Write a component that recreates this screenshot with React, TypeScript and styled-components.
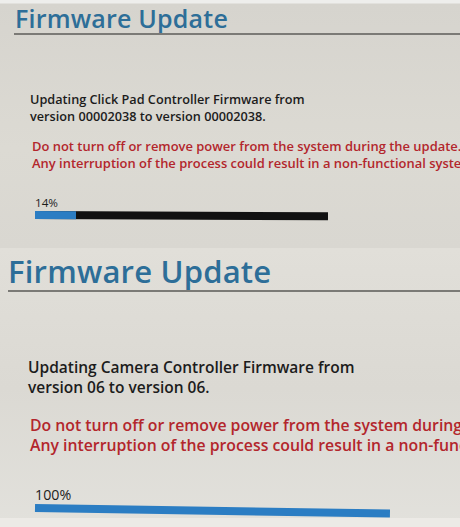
import React from "react";
import styled, { createGlobalStyle } from "styled-components";

interface UpdateInfo {
  device: string;
  from: string;
  to: string;
  percent: number;
}

const GlobalStyle = createGlobalStyle`
  html, body {
    margin: 0;
    padding: 0;
    background: #dcdad4;
  }
  body {
    font-family: "Open Sans", "Noto Sans", sans-serif;
    width: 460px;
    height: 527px;
    overflow: hidden;
  }
`;

const screens: UpdateInfo[] = [
  { device: "Click Pad", from: "00002038", to: "00002038", percent: 14 },
  { device: "Camera", from: "06", to: "06", percent: 100 },
];

const App: React.FC = () => {
  return (
    <Page>
      <GlobalStyle />
      <Screen $top>
        <Title $size={25} $left={15}>Firmware Update</Title>
        <Rule $left={14} />
        <Content $left={30} $size={12.7} $gap={56}>
          <Body>
            Updating {screens[0].device} Controller Firmware from
            <br />
            version {screens[0].from} to version {screens[0].to}.
          </Body>
          <Warning>
            Do not turn off or remove power from the system during the update.
            <br />
            Any interruption of the process could result in a non-functional system.
          </Warning>
          <Progress $left={5}>
            <Label>{screens[0].percent}%</Label>
            <Track $width={293} $height={8} $empty="#111">
              <Fill style={{ width: `${screens[0].percent}%` }} />
            </Track>
          </Progress>
        </Content>
      </Screen>
      <Screen>
        <Title $size={31} $left={8}>Firmware Update</Title>
        <Rule $left={8} />
        <Content $left={28} $size={15.5} $gap={65}>
          <Body>
            Updating {screens[1].device} Controller Firmware from
            <br />
            version {screens[1].from} to version {screens[1].to}.
          </Body>
          <Warning>
            Do not turn off or remove power from the system during the update.
            <br />
            Any interruption of the process could result in a non-functional system.
          </Warning>
          <Progress $left={7}>
            <Label>{screens[1].percent}%</Label>
            <Track $width={355} $height={8} $empty="#111" $tilt>
              <Fill style={{ width: `${screens[1].percent}%` }} />
            </Track>
          </Progress>
        </Content>
        <Bezel />
      </Screen>
    </Page>
  );
};

const Page = styled.div`
  display: flex;
  flex-direction: column;
  width: 460px;
  height: 527px;
  overflow: hidden;
`;

const Screen = styled.section<{ $top?: boolean }>`
  display: flex;
  flex-direction: column;
  height: ${(p) => (p.$top ? "248px" : "279px")};
  overflow: hidden;
  background: ${(p) =>
    p.$top
      ? "linear-gradient(180deg, #eeeeec 0px, #eeeeec 3px, #d6d4ce 4px, #dcdad3 60%, #d9d7d1 100%)"
      : "linear-gradient(180deg, #e1dfd9 0%, #dbd9d3 50%, #e2e1dc 100%)"};
`;

const Title = styled.h1<{ $size: number; $left: number }>`
  margin: ${(p) => (p.$size > 26 ? "5px" : "3px")} 0 0 ${(p) => p.$left}px;
  font-family: "Open Sans", "Noto Sans", sans-serif;
  font-size: ${(p) => p.$size}px;
  font-weight: 600;
  line-height: 1.2;
  color: #2d6e98;
  letter-spacing: 0.2px;
`;

const Rule = styled.hr<{ $left: number }>`
  margin: 0 0 0 ${(p) => p.$left}px;
  border: none;
  height: 2px;
  background: #7b7a76;
`;

const Content = styled.div<{ $left: number; $size: number; $gap: number }>`
  display: flex;
  flex-direction: column;
  margin: ${(p) => p.$gap}px 0 0 ${(p) => p.$left}px;
  font-size: ${(p) => p.$size}px;
  white-space: nowrap;
`;

const Body = styled.p`
  margin: 0;
  line-height: 1.3;
  color: #1c1c1c;
  font-weight: 600;
`;

const Warning = styled.p`
  margin: 1.08em 0 0 2px;
  font-size: 1.02em;
  line-height: 1.3;
  color: #b3262c;
  font-weight: 600;
`;

const Progress = styled.div<{ $left: number }>`
  display: flex;
  flex-direction: column;
  margin: 1.95em 0 0 ${(p) => p.$left}px;
`;

const Label = styled.span`
  font-size: 0.92em;
  line-height: 1.2;
  color: #1d1d1d;
`;

const Track = styled.div<{ $width: number; $height: number; $empty: string; $tilt?: boolean }>`
  width: ${(p) => p.$width}px;
  height: ${(p) => p.$height}px;
  margin-top: 1px;
  background: ${(p) => p.$empty};
  transform: ${(p) => (p.$tilt ? "rotate(0.9deg)" : "rotate(0.25deg)")};
  transform-origin: left center;
`;

const Fill = styled.div`
  height: 100%;
  background: #2b7dc3;
`;

const Bezel = styled.div`
  margin-top: auto;
  height: 9px;
  background: #eceae6;
`;

export default App;
